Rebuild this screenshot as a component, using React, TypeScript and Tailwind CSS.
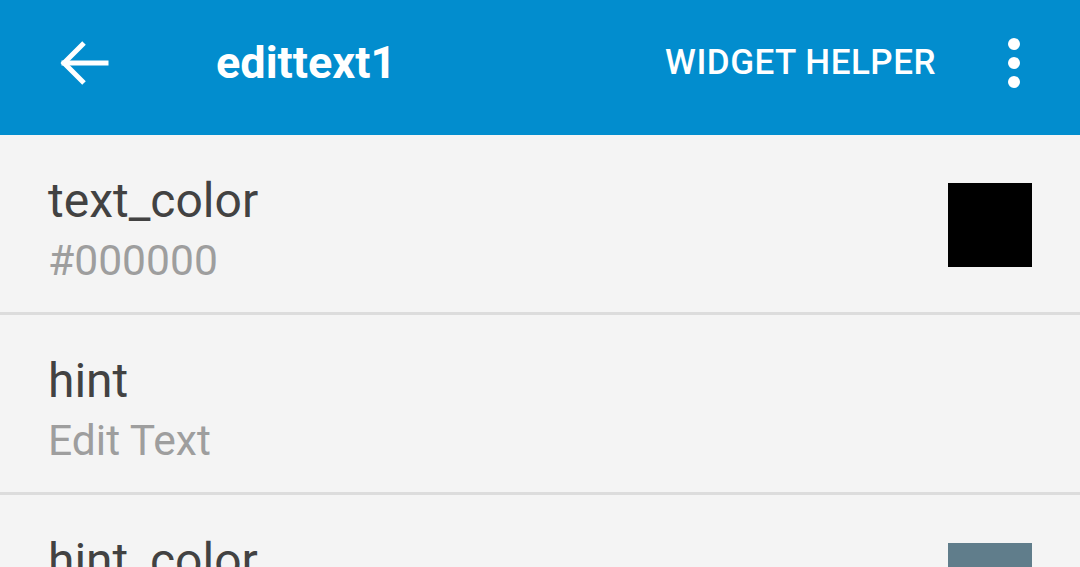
import React from 'react'

type Prop = {
  name: string
  value: string
  swatch?: string
}

const props: Prop[] = [
  { name: 'text_color', value: '#000000', swatch: 'bg-[#000000]' },
  { name: 'hint', value: 'Edit Text' },
  { name: 'hint_color', value: '#607d8b', swatch: 'bg-[#607d8b]' },
]

function PropRow({ p }: { p: Prop }) {
  return (
    <div className="flex items-start justify-between border-b-[3px] border-[#dcdcdc] h-[180px] pl-[48px] pr-[48px]">
      <div className="flex flex-col pt-[36px]">
        <span className="text-[48px] leading-[60px] text-[#424242]">{p.name}</span>
        <span className="text-[42.6px] leading-[58px] text-[#9e9e9e]">{p.value}</span>
      </div>
      {p.swatch && <div className={`w-[84px] h-[84px] mt-[48px] ${p.swatch}`} />}
    </div>
  )
}

export default function App() {
  return (
    <div className="w-[1080px] h-[567px] overflow-hidden bg-[#f4f4f4] font-['Roboto',sans-serif]">
      <header className="h-[135px] bg-[#028dce] flex items-center pb-[9px] text-white">
        <div className="w-[168px] pl-[58px] flex items-center">
          <svg width="52" height="48" viewBox="0 0 52 48" fill="none" stroke="white" strokeWidth="5" strokeLinecap="square">
            <path d="M6 24 H48" />
            <path d="M26 4 L6 24 L26 44" strokeLinecap="butt" />
          </svg>
        </div>
        <h1 className="ml-[48px] text-[45px] font-bold">edittext1</h1>
        <div className="flex-1" />
        <button className="text-[35px] font-medium uppercase tracking-[0.5px] mr-[72px]">Widget Helper</button>
        <div className="flex flex-col items-center gap-[7px] mr-[60px]">
          <span className="w-[12px] h-[12px] rounded-full bg-white" />
          <span className="w-[12px] h-[12px] rounded-full bg-white" />
          <span className="w-[12px] h-[12px] rounded-full bg-white" />
        </div>
      </header>
      <div className="flex flex-col">
        {props.map((p) => (
          <PropRow key={p.name} p={p} />
        ))}
      </div>
    </div>
  )
}
